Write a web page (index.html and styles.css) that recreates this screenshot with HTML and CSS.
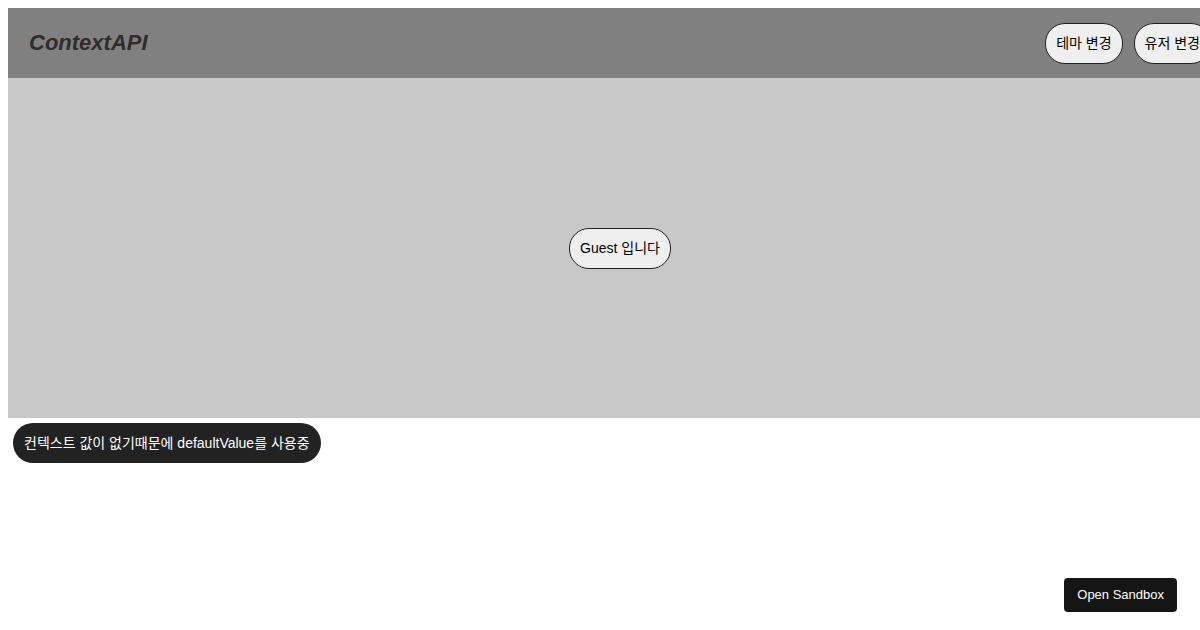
FILE: index.html
```html
<!DOCTYPE html>
<html lang="ko">
<head>
<meta charset="utf-8">
<title>ContextAPI</title>
<link rel="stylesheet" href="styles.css">
</head>
<body>
  <header class="header">
    <h1 class="logo">ContextAPI</h1>
    <div class="header-actions">
      <button class="pill-btn">테마 변경</button>
      <button class="pill-btn">유저 변경</button>
    </div>
  </header>
  <main class="stage">
    <button class="pill-btn">Guest 입니다</button>
  </main>
  <div class="notice">컨텍스트 값이 없기때문에 defaultValue를 사용중</div>
  <a class="sandbox-btn" href="#">Open Sandbox</a>
</body>
</html>
```
FILE: styles.css
```css
html {
  overflow: hidden;
}
body {
  margin: 8px 0 8px 8px;
  font-family: "Liberation Sans", Arial, "Noto Sans CJK KR", sans-serif;
  background: #ffffff;
}
.header {
  width: 100%;
  box-sizing: border-box;
  height: 70px;
  background: #808080;
  display: flex;
  align-items: center;
  justify-content: space-between;
  padding: 0 0 0 21px;
}
.logo {
  margin: 0;
  font-size: 22px;
  font-weight: bold;
  font-style: italic;
  color: #312b2b;
}
.header-actions {
  display: flex;
  gap: 11px;
  padding-top: 1px;
  margin-right: -11px;
}
.pill-btn {
  font-family: "Liberation Sans", Arial, "Noto Sans CJK KR", sans-serif;
  font-size: 14px;
  line-height: 19px;
  padding: 10px 10px;
  background: #efefef;
  color: #000;
  border: 1px solid #222;
  border-radius: 20px;
}
.stage {
  width: 100%;
  box-sizing: border-box;
  height: 340px;
  background: #c8c8c8;
  display: flex;
  align-items: center;
  justify-content: center;
  padding-left: 32px;
}
.notice {
  display: inline-block;
  margin: 5px 5px;
  padding: 11px 11px;
  font-size: 14px;
  line-height: 18px;
  background: #222222;
  color: #ffffff;
  border-radius: 20px;
}
.sandbox-btn {
  position: fixed;
  right: 23px;
  bottom: 18px;
  padding: 9px 13px;
  font-size: 13px;
  line-height: 16px;
  background: #151515;
  color: #ffffff;
  text-decoration: none;
  border-radius: 4px;
}
```
